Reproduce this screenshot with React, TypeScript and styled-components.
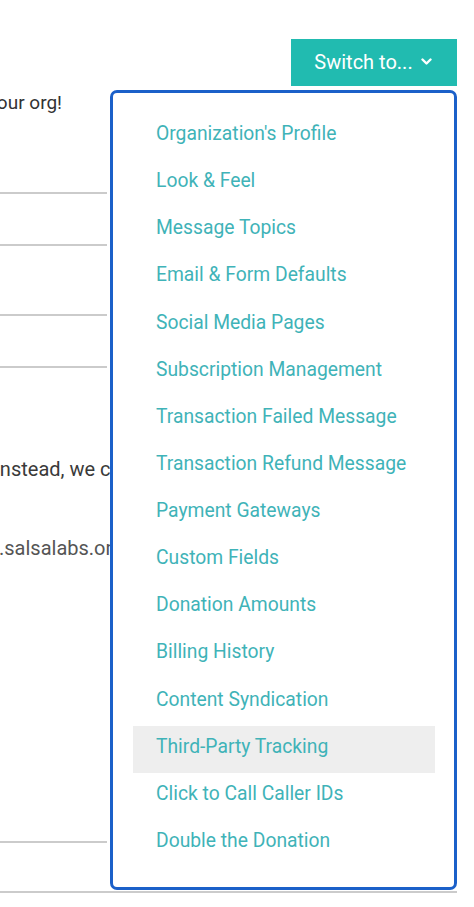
import React from "react";
import styled, { createGlobalStyle } from "styled-components";

const Global = createGlobalStyle`
  html, body { margin: 0; padding: 0; background: #fff; }
  body { font-family: Roboto, "Liberation Sans", Arial, sans-serif; }
  * { box-sizing: border-box; }
`;

const Page = styled.div`
  position: relative;
  width: 474px;
  height: 907px;
  overflow: hidden;
  background: #fff;
`;

const TopBar = styled.div`
  display: flex;
  justify-content: flex-end;
  padding: 39px 17px 0 0;
`;

const SwitchButton = styled.button`
  display: flex;
  align-items: center;
  justify-content: center;
  gap: 8px;
  width: 166px;
  height: 47px;
  border: none;
  border-radius: 0;
  background: #21bbb0;
  color: #fff;
  font-family: Roboto, "Liberation Sans", Arial, sans-serif;
  font-size: 20px;
  padding: 0 2px 2px 0;
  cursor: pointer;
`;

const LeftColumn = styled.div`
  display: flex;
  flex-direction: column;
  width: 110px;
  overflow: hidden;
`;

const TextLine = styled.div<{ $top: number; $shift?: number; $color: string; $endAt?: number; $size?: number }>`
  display: flex;
  justify-content: ${(p) => (p.$endAt ? "flex-end" : "flex-start")};
  width: ${(p) => (p.$endAt ? `${p.$endAt}px` : "auto")};
  margin-top: ${(p) => p.$top}px;
  margin-left: ${(p) => p.$shift ?? 0}px;
  height: 24px;
  line-height: 24px;
  font-size: ${(p) => p.$size ?? 19}px;
  color: ${(p) => p.$color};
  white-space: nowrap;
`;

const Rule = styled.div<{ $top: number }>`
  flex: none;
  margin-top: ${(p) => p.$top}px;
  width: 107px;
  height: 2px;
  background: #cbcbcb;
`;

const BottomRule = styled.div`
  margin-top: 48px;
  width: 457px;
  height: 2px;
  background: #cbcbcb;
`;

const Menu = styled.div`
  position: absolute;
  left: 110px;
  top: 90px;
  width: 347px;
  height: 800px;
  border: 3px solid #1b60c9;
  border-radius: 7px;
  background: #fff;
  padding: 20px 19px 20px 20px;
  display: flex;
  flex-direction: column;
`;

const MenuItem = styled.a<{ $active?: boolean }>`
  display: flex;
  align-items: center;
  height: 47.13px;
  padding: 0 0 6px 23px;
  font-size: 19.3px;
  color: #3fb3b8;
  text-decoration: none;
  background: ${(p) => (p.$active ? "#eeeeee" : "transparent")};
  white-space: nowrap;
`;

const items = [
  "Organization's Profile",
  "Look & Feel",
  "Message Topics",
  "Email & Form Defaults",
  "Social Media Pages",
  "Subscription Management",
  "Transaction Failed Message",
  "Transaction Refund Message",
  "Payment Gateways",
  "Custom Fields",
  "Donation Amounts",
  "Billing History",
  "Content Syndication",
  "Third-Party Tracking",
  "Click to Call Caller IDs",
  "Double the Donation",
];

const Chevron = () => (
  <svg width="11" height="8" viewBox="0 0 11 8" aria-hidden="true">
    <polyline
      points="1.5,1.5 5.5,5.5 9.5,1.5"
      fill="none"
      stroke="#fff"
      strokeWidth="2.4"
      strokeLinecap="round"
      strokeLinejoin="round"
    />
  </svg>
);

export default function App() {
  return (
    <Page>
      <Global />
      <TopBar>
        <SwitchButton>
          <span>Switch to...</span>
          <Chevron />
        </SwitchButton>
      </TopBar>
      <LeftColumn>
        <TextLine $top={5} $endAt={62} $color="#333">
          Welcome to your org!
        </TextLine>
        <Rule $top={77} />
        <Rule $top={50} />
        <Rule $top={68} />
        <Rule $top={50} />
        <TextLine $top={89} $shift={-5} $size={20} $color="#3a3a3a">
          instead, we can
        </TextLine>
        <TextLine $top={55} $shift={-1} $size={20} $color="#555">
          .salsalabs.org
        </TextLine>
        <Rule $top={281} />
      </LeftColumn>
      <BottomRule />
      <Menu>
        {items.map((t) => (
          <MenuItem key={t} href="#" $active={t === "Third-Party Tracking"}>
            {t}
          </MenuItem>
        ))}
      </Menu>
    </Page>
  );
}
